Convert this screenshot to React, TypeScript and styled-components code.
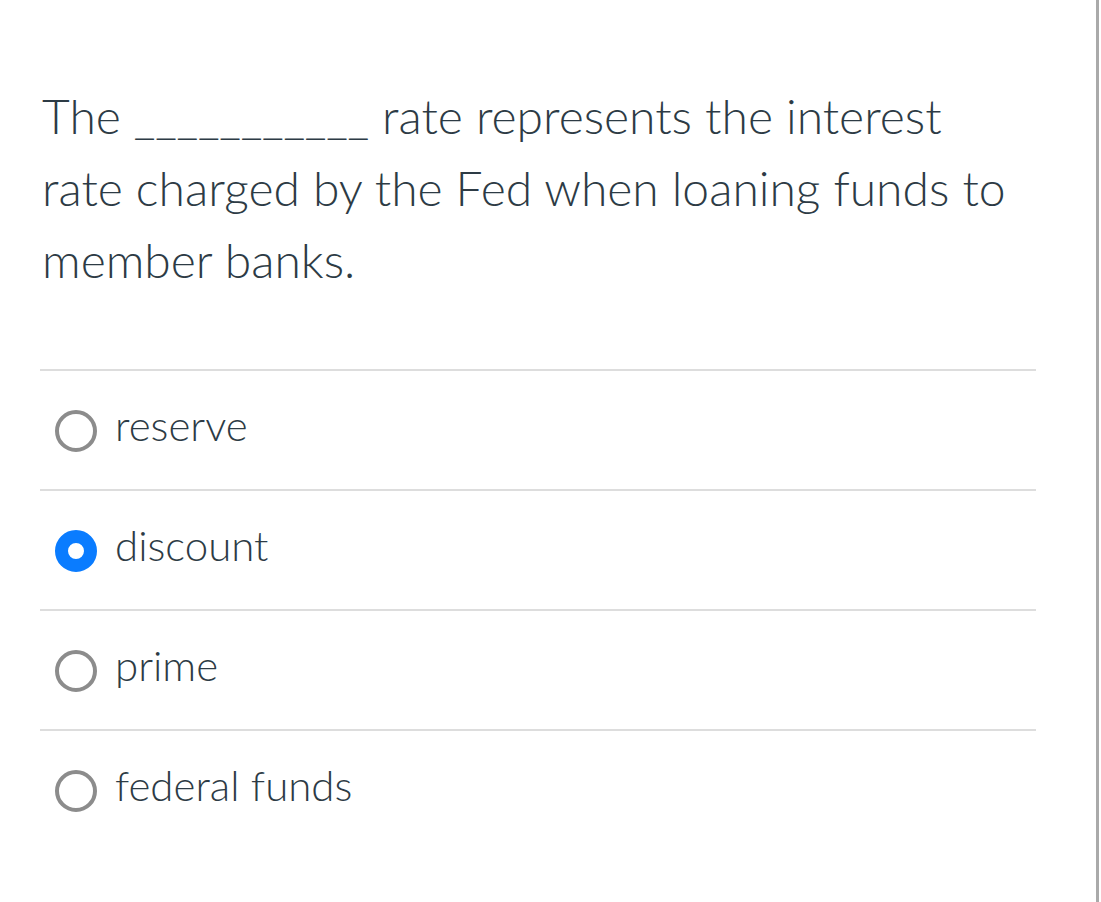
import * as React from 'react';
import styled, { createGlobalStyle } from 'styled-components';

const GlobalStyle = createGlobalStyle`
  html, body {
    margin: 0;
    padding: 0;
    background: #ffffff;
  }
  body {
    font-family: Lato, "Noto Sans", sans-serif;
    color: #2d3b45;
  }
`

const Page = styled.div`
  display: flex;
  min-height: 902px;
  box-sizing: border-box;
  width: 1099px;
  border-right: 3px solid #aaaaaa;
`

const Quiz = styled.div`
  width: 996px;
  padding: 80px 0 0 40px;
`

const Question = styled.div`
  max-width: 975px;
  font-size: 48px;
  font-weight: 300;
  line-height: 72px;
  margin: 0 0 73px 2px;
`

const Blank = styled.span`
  letter-spacing: -0.25px;
`

const AnswerList = styled.div`
  display: flex;
  flex-direction: column;
`

const AnswerRow = styled.label`
  display: flex;
  align-items: center;
  height: 118px;
  border-top: 2px solid #dddddd;
  padding-left: 15px;
  cursor: pointer;
`

interface RadioProps {
  checked?: boolean;
}
const Radio = styled.span<RadioProps>`
  box-sizing: border-box;
  width: 42px;
  height: 42px;
  border-radius: 50%;
  background: #ffffff;
  border: ${(props: RadioProps) => props.checked ? '13px solid #0a7cff' : '4px solid #8c8c8c'};
  flex-shrink: 0;
  margin-top: 2px;
`

const AnswerText = styled.span`
  font-size: 42px;
  font-weight: 300;
  margin-left: 18px;
  margin-top: -10px;
`

const answers = [
  { text: 'reserve', checked: false },
  { text: 'discount', checked: true },
  { text: 'prime', checked: false },
  { text: 'federal funds', checked: false },
];

export default function App() {
  return (
    <>
      <GlobalStyle />
      <Page>
        <Quiz>
          <Question>
            The <Blank>___________</Blank> rate represents the interest rate charged by the Fed when loaning funds to member banks.
          </Question>
          <AnswerList>
            {answers.map(a => (
              <AnswerRow key={a.text}>
                <Radio checked={a.checked} />
                <AnswerText>{a.text}</AnswerText>
              </AnswerRow>
            ))}
          </AnswerList>
        </Quiz>
      </Page>
    </>
  );
}
